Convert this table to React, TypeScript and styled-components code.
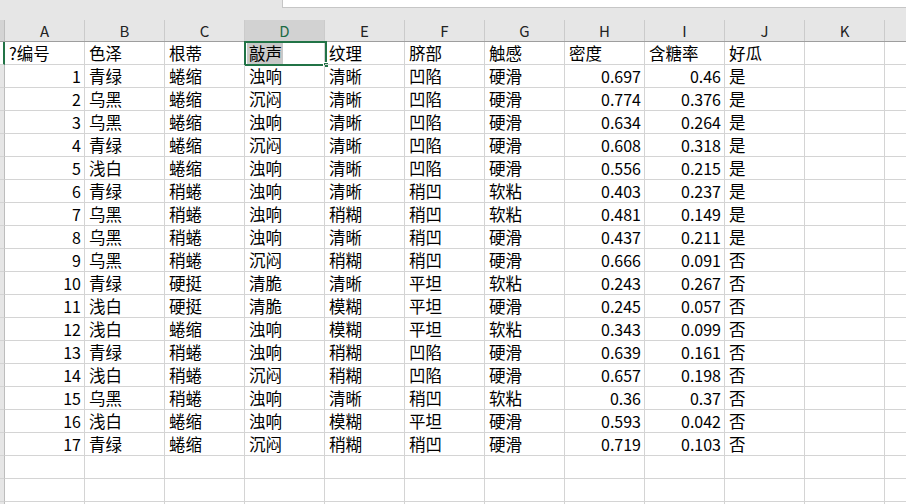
import React from "react";
import styled, { createGlobalStyle, css } from "styled-components";

const GlobalStyle = createGlobalStyle`
  html, body { margin: 0; padding: 0; background: #ffffff; overflow: hidden; }
  * { box-sizing: border-box; }
`;

const FONT = `"Noto Sans CJK SC", "Noto Sans", sans-serif`;
const GREEN = "#217346";

const Sheet = styled.div`
  width: 906px;
  height: 504px;
  overflow: hidden;
  background: #ffffff;
  font-family: ${FONT};
  display: flex;
  flex-direction: column;
`;

const TopBar = styled.div`
  height: 20px;
  flex: none;
  background: #e6e6e6;
  display: flex;
  align-items: flex-start;
`;

const TopSpacer = styled.div`
  width: 282px;
  flex: none;
`;

const FormulaEdge = styled.div`
  flex: 1;
  height: 8px;
  background: #ffffff;
  border-left: 1px solid #c6c6c6;
  border-bottom: 1px solid #c6c6c6;
`;

const HeaderRow = styled.div`
  height: 22px;
  flex: none;
  display: flex;
  background: #e6e6e6;
  border-bottom: 1px solid #9e9e9e;
`;

const Corner = styled.div`
  width: 5px;
  flex: none;
  background: #d4d4d4;
  border-right: 1px solid #bdbdbd;
`;

const ColHead = styled.div<{ $selected?: boolean }>`
  width: 80px;
  flex: none;
  border-right: 1px solid #cbcbcb;
  display: flex;
  align-items: center;
  justify-content: center;
  font-size: 15px;
  line-height: 21px;
  color: #222222;
  ${(p) =>
    p.$selected &&
    css`
      background: #d2d2d2;
      color: #1d6b45;
    `}
`;

const Row = styled.div`
  height: 23px;
  flex: none;
  display: flex;
`;

const RowHead = styled.div<{ $selected?: boolean }>`
  width: 5px;
  flex: none;
  background: #e6e6e6;
  border-right: 1px solid #bdbdbd;
  border-bottom: 1px solid #d4d4d4;
  ${(p) =>
    p.$selected &&
    css`
      background: #ffffff;
      border-right: 2px solid ${GREEN};
    `}
`;

const Cell = styled.div<{ $num?: boolean }>`
  position: relative;
  width: 80px;
  flex: none;
  height: 23px;
  border-right: 1px solid #d4d4d4;
  border-bottom: 1px solid #d4d4d4;
  padding: 0 3px 0 4px;
  font-size: ${(p) => (p.$num ? "16px" : "16.5px")};
  line-height: 22px;
  color: #000000;
  white-space: nowrap;
  text-align: ${(p) => (p.$num ? "right" : "left")};
`;

const Highlight = styled.span`
  background: #c8c8c8;
  margin-left: -2px;
  padding-left: 2px;
  padding-right: 1px;
`;

const SelectionBox = styled.div`
  position: absolute;
  left: -1px;
  top: -1px;
  width: 83px;
  height: 25px;
  border: 2px solid ${GREEN};
  pointer-events: none;
`;

const FillHandle = styled.div`
  position: absolute;
  right: -4px;
  bottom: -4px;
  width: 6px;
  height: 6px;
  background: ${GREEN};
  border: 1px solid #ffffff;
`;

const letters = ["A", "B", "C", "D", "E", "F", "G", "H", "I", "J", "K", ""];

const header = ["?编号", "色泽", "根蒂", "敲声", "纹理", "脐部", "触感", "密度", "含糖率", "好瓜"];

const data: (string | number)[][] = [
  [1, "青绿", "蜷缩", "浊响", "清晰", "凹陷", "硬滑", 0.697, 0.46, "是"],
  [2, "乌黑", "蜷缩", "沉闷", "清晰", "凹陷", "硬滑", 0.774, 0.376, "是"],
  [3, "乌黑", "蜷缩", "浊响", "清晰", "凹陷", "硬滑", 0.634, 0.264, "是"],
  [4, "青绿", "蜷缩", "沉闷", "清晰", "凹陷", "硬滑", 0.608, 0.318, "是"],
  [5, "浅白", "蜷缩", "浊响", "清晰", "凹陷", "硬滑", 0.556, 0.215, "是"],
  [6, "青绿", "稍蜷", "浊响", "清晰", "稍凹", "软粘", 0.403, 0.237, "是"],
  [7, "乌黑", "稍蜷", "浊响", "稍糊", "稍凹", "软粘", 0.481, 0.149, "是"],
  [8, "乌黑", "稍蜷", "浊响", "清晰", "稍凹", "硬滑", 0.437, 0.211, "是"],
  [9, "乌黑", "稍蜷", "沉闷", "稍糊", "稍凹", "硬滑", 0.666, 0.091, "否"],
  [10, "青绿", "硬挺", "清脆", "清晰", "平坦", "软粘", 0.243, 0.267, "否"],
  [11, "浅白", "硬挺", "清脆", "模糊", "平坦", "硬滑", 0.245, 0.057, "否"],
  [12, "浅白", "蜷缩", "浊响", "模糊", "平坦", "软粘", 0.343, 0.099, "否"],
  [13, "青绿", "稍蜷", "浊响", "稍糊", "凹陷", "硬滑", 0.639, 0.161, "否"],
  [14, "浅白", "稍蜷", "沉闷", "稍糊", "凹陷", "硬滑", 0.657, 0.198, "否"],
  [15, "乌黑", "稍蜷", "浊响", "清晰", "稍凹", "软粘", 0.36, 0.37, "否"],
  [16, "浅白", "蜷缩", "浊响", "模糊", "平坦", "硬滑", 0.593, 0.042, "否"],
  [17, "青绿", "蜷缩", "沉闷", "稍糊", "稍凹", "硬滑", 0.719, 0.103, "否"],
];

const COLS = letters.length;

export default function App() {
  return (
    <>
      <GlobalStyle />
      <Sheet>
        <TopBar>
          <TopSpacer />
          <FormulaEdge />
        </TopBar>
        <HeaderRow>
          <Corner />
          {letters.map((l, i) => (
            <ColHead key={i} $selected={l === "D"}>
              {l}
            </ColHead>
          ))}
        </HeaderRow>
        <Row>
          <RowHead $selected />
          {Array.from({ length: COLS }).map((_, i) => (
            <Cell key={i}>
              {i === 3 ? (
                <>
                  <Highlight>{header[i]}</Highlight>
                  <SelectionBox>
                    <FillHandle />
                  </SelectionBox>
                </>
              ) : (
                header[i] ?? ""
              )}
            </Cell>
          ))}
        </Row>
        {data.map((r, ri) => (
          <Row key={ri}>
            <RowHead />
            {Array.from({ length: COLS }).map((_, i) => {
              const v = r[i];
              const isNum = typeof v === "number";
              return (
                <Cell key={i} $num={isNum}>
                  {v === undefined ? "" : String(v)}
                </Cell>
              );
            })}
          </Row>
        ))}
        {[0, 1, 2].map((k) => (
          <Row key={`e${k}`}>
            <RowHead />
            {Array.from({ length: COLS }).map((_, i) => (
              <Cell key={i} />
            ))}
          </Row>
        ))}
      </Sheet>
    </>
  );
}
